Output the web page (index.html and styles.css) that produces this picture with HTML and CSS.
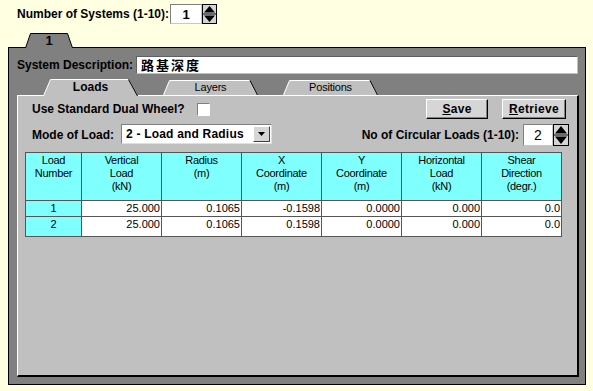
FILE: index.html
```html
<!DOCTYPE html>
<html>
<head>
<meta charset="utf-8">
<link rel="stylesheet" href="styles.css">
</head>
<body>
<div class="sys-row">
  <span class="lbl sys-lbl">Number of Systems (1-10):</span>
  <div class="numbox">1</div>
  <svg class="spin" width="15" height="20" viewBox="0 0 15 20"><rect x="0.5" y="0.5" width="14" height="19" fill="#d4d4d4" stroke="#000"/><line x1="0" y1="10" x2="15" y2="10" stroke="#000"/><polygon points="7.5,2 13,8.5 2,8.5" fill="#000"/><polygon points="2,11.5 13,11.5 7.5,18" fill="#000"/></svg>
</div>

<div class="otab-row">
  <div class="otab">
    <svg width="48" height="15" viewBox="0 0 48 15"><path d="M0.5 15 L5.5 0.5 H42.5 L47.5 15" fill="#808080" stroke="#000"/></svg>
    <span>1</span>
  </div>
</div>

<div class="outer">
  <div class="desc-row">
    <span class="lbl desc-lbl">System Description:</span>
    <div class="desc-field">路基深度</div>
  </div>

  <div class="subtabs">
    <div class="stab active">
      <svg width="95" height="17" viewBox="0 0 95 17"><path d="M0 17 L7.5 0.5 H86 L95 17 Z" fill="#c0c0c0"/><path d="M0.5 17 L7.5 0.5 H85.5" fill="none" stroke="#fff"/><path d="M85.5 0.5 L94.5 17" fill="none" stroke="#000"/></svg>
      <span>Loads</span>
    </div>
    <div class="stab">
      <svg width="95" height="15" viewBox="0 0 95 15"><path d="M0 15 L6.5 0.5 H87 L95 15 Z" fill="#c0c0c0"/><path d="M0.5 15 L6.5 0.5 H87" fill="none" stroke="#fff"/><path d="M87 0.5 L94.5 15" fill="none" stroke="#000"/></svg>
      <span>Layers</span>
    </div>
    <div class="stab">
      <svg width="95" height="15" viewBox="0 0 95 15"><path d="M0 15 L6.5 0.5 H87 L95 15 Z" fill="#c0c0c0"/><path d="M0.5 15 L6.5 0.5 H87" fill="none" stroke="#fff"/><path d="M87 0.5 L94.5 15" fill="none" stroke="#000"/></svg>
      <span>Positions</span>
    </div>
  </div>

  <div class="inner">
    <div class="row1">
      <span class="lbl dual-lbl">Use Standard Dual Wheel?</span>
      <div class="chk"></div>
      <div class="btns">
        <div class="btn save"><u>S</u>ave</div>
        <div class="btn retr"><u>R</u>etrieve</div>
      </div>
    </div>
    <div class="row2">
      <span class="lbl mode-lbl">Mode of Load:</span>
      <div class="combo">
        <span class="combo-text">2 - Load and Radius</span>
        <div class="combo-btn"><svg width="7" height="4" viewBox="0 0 7 4"><polygon points="0,0 7,0 3.5,4" fill="#000"/></svg></div>
      </div>
      <span class="lbl circ-lbl">No of Circular Loads (1-10):</span>
      <div class="numbox numbox2">2</div>
      <svg class="spin" width="16" height="22" viewBox="0 0 16 22"><rect x="0.5" y="0.5" width="15" height="21" fill="#d4d4d4" stroke="#000"/><line x1="0" y1="11" x2="16" y2="11" stroke="#000"/><polygon points="8,2 14,9.5 2,9.5" fill="#000"/><polygon points="2,12.5 14,12.5 8,20" fill="#000"/></svg>
    </div>

    <table class="grid">
      <colgroup>
        <col class="c0"><col class="c1"><col class="c1"><col class="c1"><col class="c1"><col class="c1"><col class="c1">
      </colgroup>
      <tr class="hdr">
        <th>Load<br>Number</th>
        <th>Vertical<br>Load<br>(kN)</th>
        <th>Radius<br>(m)</th>
        <th>X<br>Coordinate<br>(m)</th>
        <th>Y<br>Coordinate<br>(m)</th>
        <th>Horizontal<br>Load<br>(kN)</th>
        <th>Shear<br>Direction<br>(degr.)</th>
      </tr>
      <tr class="r1">
        <td class="num">1</td><td>25.000</td><td>0.1065</td><td>-0.1598</td><td>0.0000</td><td>0.000</td><td>0.0</td>
      </tr>
      <tr class="r2">
        <td class="num">2</td><td>25.000</td><td>0.1065</td><td>0.1598</td><td>0.0000</td><td>0.000</td><td>0.0</td>
      </tr>
    </table>
  </div>
</div>
</body>
</html>
```

FILE: styles.css
```css
body {
  margin: 0;
  background: #ffffe1;
  font-family: "Liberation Sans", Arial, sans-serif;
  font-size: 12px;
  color: #000;
  width: 593px;
  height: 391px;
  overflow: hidden;
}

.lbl {
  font-weight: bold;
  font-size: 12px;
  white-space: nowrap;
}

.sys-row {
  display: flex;
  align-items: center;
  padding: 4px 0 0 17px;
  height: 20px;
}

.sys-lbl { width: 153px; }

.numbox {
  width: 32px;
  height: 20px;
  box-sizing: border-box;
  background: #fff;
  border: 1px solid #808080;
  border-right-color: #c8c8c8;
  border-bottom-color: #c8c8c8;
  display: flex;
  align-items: center;
  justify-content: center;
  font-weight: bold;
  font-size: 13px;
}

.spin { display: block; }

.otab-row {
  margin-top: 9px;
  padding-left: 25px;
  height: 15px;
  margin-bottom: -1px;
  position: relative;
  z-index: 1;
}

.otab {
  display: grid;
  width: 48px;
  height: 15px;
}

.otab > * { grid-area: 1 / 1; }
.otab svg { display: block; }

.otab span {
  text-align: center;
  font-weight: bold;
  font-size: 13px;
  line-height: 15px;
}

.outer {
  margin-left: 8px;
  width: 578px;
  height: 338px;
  box-sizing: border-box;
  background: #808080;
  border: 1px solid #000;
  padding: 8px 0 0 8px;
}

.desc-row {
  display: flex;
  align-items: center;
  height: 18px;
}

.desc-lbl { width: 119px; }

.desc-field {
  width: 442px;
  height: 18px;
  box-sizing: border-box;
  background: #fff;
  border: 1px solid #c0c0c0;
  border-top-color: #606060;
  border-left-color: #606060;
  font-family: "Noto Sans CJK SC", "Noto Sans CJK JP", sans-serif;
  font-weight: bold;
  font-size: 13px;
  letter-spacing: 2px;
  line-height: 16px;
  padding-left: 4px;
}

.subtabs {
  display: flex;
  align-items: flex-start;
  margin-top: 5px;
  padding-left: 26px;
  gap: 25px;
  height: 17px;
  margin-bottom: -1px;
  position: relative;
  z-index: 1;
}

.stab {
  display: grid;
  width: 95px;
  height: 15px;
  margin-top: 1px;
}

.stab.active {
  height: 17px;
  margin-top: 0;
}

.stab > * { grid-area: 1 / 1; }
.stab svg { display: block; }

.stab span {
  text-align: center;
  font-size: 11px;
  line-height: 15px;
  letter-spacing: -0.2px;
}

.stab.active span {
  font-weight: bold;
  font-size: 12px;
  letter-spacing: 0;
  line-height: 16px;
}

.inner {
  width: 562px;
  height: 282px;
  box-sizing: border-box;
  background: #c0c0c0;
  border-left: 1px solid #fff;
  border-top: 1px solid #fff;
  border-right: 2px solid #000;
  border-bottom: 2px solid #000;
}

.row1 {
  display: flex;
  align-items: center;
  height: 20px;
  margin-top: 3px;
  padding: 0 11px 0 14px;
}

.dual-lbl { width: 165px; }

.chk {
  width: 13px;
  height: 13px;
  box-sizing: border-box;
  background: #fff;
  border: 1px solid #fff;
  border-top-color: #808080;
  border-left-color: #808080;
}

.btns {
  margin-left: auto;
  display: flex;
  gap: 14px;
}

.btn {
  height: 20px;
  box-sizing: border-box;
  background: #d6d6d6;
  border: 1px solid;
  border-color: #fff #000 #000 #fff;
  box-shadow: inset -1px -1px #808080;
  font-weight: bold;
  font-size: 12px;
  display: flex;
  align-items: center;
  justify-content: center;
  letter-spacing: 0.3px;
}

.save { width: 62px; }
.retr { width: 64px; }

.row2 {
  display: flex;
  align-items: center;
  height: 22px;
  margin-top: 5px;
  padding: 0 8px 0 14px;
}

.mode-lbl { width: 89px; }

.combo {
  align-self: flex-start;
  width: 151px;
  height: 20px;
  box-sizing: border-box;
  background: #fff;
  border: 1px solid #808080;
  border-right-color: #e0e0e0;
  border-bottom-color: #e0e0e0;
  display: flex;
  align-items: center;
  padding: 0 1px 0 4px;
}

.combo-text {
  font-weight: bold;
  font-size: 12px;
  flex: 1;
  letter-spacing: 0.2px;
}

.combo-btn {
  width: 17px;
  height: 16px;
  box-sizing: border-box;
  background: #d6d6d6;
  border: 1px solid;
  border-color: #fff #404040 #404040 #fff;
  display: flex;
  align-items: center;
  justify-content: center;
}

.combo-btn svg { display: block; }

.circ-lbl {
  margin-left: auto;
  margin-right: 4px;
}

.numbox2 {
  width: 30px;
  height: 22px;
  font-weight: normal;
  font-size: 14px;
}

.grid {
  margin: 6px 0 0 7px;
  border-collapse: collapse;
  table-layout: fixed;
  width: 537px;
  font-size: 11px;
  border: 1px solid #555;
}

.c0 { width: 56px; }
.c1 { width: 80px; }

.grid th,
.grid td {
  border: 1px solid #555;
  padding: 0 1px;
  vertical-align: top;
}

.grid th {
  background: #80ffff;
  font-weight: normal;
  text-align: center;
  line-height: 13px;
  letter-spacing: -0.3px;
  padding-top: 1px;
}

.hdr { height: 48px; }
.r1 { height: 16px; }
.r2 { height: 20px; }

.grid td {
  background: #fff;
  text-align: right;
  line-height: 14px;
}

.grid td.num {
  background: #80ffff;
  text-align: center;
}
```
